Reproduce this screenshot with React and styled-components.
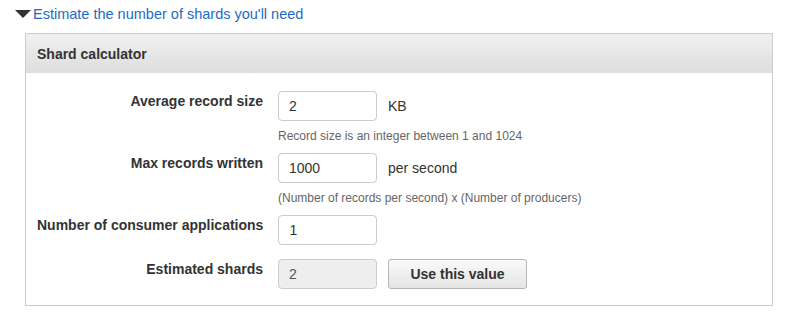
import React from "react";
import styled, { createGlobalStyle } from "styled-components";

const Global = createGlobalStyle`
  html, body { margin: 0; padding: 0; background: #fff; }
  body { font-family: "Liberation Sans", Arial, sans-serif; color: #333; }
  * { box-sizing: border-box; }
`;

const Page = styled.div`
  padding: 4px 18px 0 15px;
`;

const Toggle = styled.a`
  display: flex;
  align-items: center;
  gap: 2px;
  height: 20px;
  font-size: 14.5px;
  color: #1e6bc6;
  text-decoration: none;
  cursor: pointer;
`;

const Panel = styled.section`
  margin: 9px 0 0 10px;
  border: 1px solid #cccccc;
  background: #fff;
`;

const PanelHeader = styled.header`
  height: 39px;
  display: flex;
  align-items: center;
  padding: 0 11px;
  font-size: 14px;
  font-weight: bold;
  color: #333;
  background: linear-gradient(to bottom, #f0f0f0, #dedede);
`;

const PanelBody = styled.div`
  padding: 18px 11px 16px 11px;
`;

const Group = styled.div`
  display: flex;
  align-items: flex-start;
  margin-bottom: ${(p) => p.$mb ?? 0}px;
`;

const Label = styled.label`
  flex: 0 0 226px;
  display: flex;
  justify-content: flex-end;
  margin-right: 15px;
  white-space: nowrap;
  font-size: 14px;
  font-weight: bold;
  line-height: 20px;
  color: #333;
`;

const Controls = styled.div`
  display: flex;
  flex-direction: column;
`;

const ControlRow = styled.div`
  display: flex;
  align-items: center;
  gap: 11px;
`;

const Input = styled.input`
  width: 99px;
  height: 30px;
  padding: 0 10px;
  border: 1px solid #cccccc;
  border-radius: 4px;
  font-family: "Liberation Sans", Arial, sans-serif;
  font-size: 14px;
  color: ${(p) => (p.readOnly ? "#555" : "#333")};
  background: ${(p) => (p.readOnly ? "#eeeeee" : "#fff")};
  outline: none;
`;

const Unit = styled.span`
  font-size: 14px;
  color: #333;
`;

const Hint = styled.div`
  margin-top: 8px;
  font-size: 12px;
  line-height: 14px;
  color: #666;
`;

const Button = styled.button`
  width: 139px;
  height: 30px;
  border: 1px solid #b5b5b5;
  border-radius: 3px;
  background: linear-gradient(to bottom, #fafafa, #e4e4e4);
  font-family: "Liberation Sans", Arial, sans-serif;
  font-size: 14px;
  font-weight: bold;
  color: #333;
  cursor: pointer;
`;

const Caret = () => (
  <svg width="16" height="8" viewBox="0 0 16 8">
    <path d="M0 0 L16 0 L8 8 Z" fill="#333" />
  </svg>
);

export default function App() {
  return (
    <>
      <Global />
      <Page>
        <Toggle>
          <Caret />
          Estimate the number of shards you'll need
        </Toggle>
        <Panel>
          <PanelHeader>Shard calculator</PanelHeader>
          <PanelBody>
            <Group $mb={10}>
              <Label>Average record size</Label>
              <Controls>
                <ControlRow>
                  <Input defaultValue="2" />
                  <Unit>KB</Unit>
                </ControlRow>
                <Hint>Record size is an integer between 1 and 1024</Hint>
              </Controls>
            </Group>
            <Group $mb={10}>
              <Label>Max records written</Label>
              <Controls>
                <ControlRow>
                  <Input defaultValue="1000" />
                  <Unit>per second</Unit>
                </ControlRow>
                <Hint>(Number of records per second) x (Number of producers)</Hint>
              </Controls>
            </Group>
            <Group $mb={14}>
              <Label>Number of consumer applications</Label>
              <Controls>
                <ControlRow>
                  <Input defaultValue="1" />
                </ControlRow>
              </Controls>
            </Group>
            <Group>
              <Label>Estimated shards</Label>
              <Controls>
                <ControlRow>
                  <Input value="2" readOnly />
                  <Button>Use this value</Button>
                </ControlRow>
              </Controls>
            </Group>
          </PanelBody>
        </Panel>
      </Page>
    </>
  );
}
